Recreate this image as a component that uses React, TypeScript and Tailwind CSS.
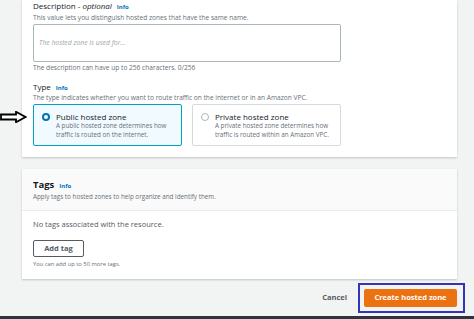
import React from "react";

const FONT = "font-['Open_Sans','Liberation_Sans',sans-serif]";

function InfoLink() {
  return <span className="ml-[5px] text-[6px] font-bold text-[#0073bb]">Info</span>;
}

function RadioCard({
  title,
  desc,
  selected,
}: {
  title: string;
  desc: string[];
  selected?: boolean;
}) {
  return (
    <div
      className={
        selected
          ? "flex h-[42px] w-[149px] gap-[6px] rounded-[2px] border border-[#00a1c9] bg-[#f1faff] px-[8px] pt-[6px]"
          : "flex h-[42px] w-[149px] gap-[6px] rounded-[2px] border border-[#d5dbdb] bg-white px-[8px] pt-[6px]"
      }
    >
      <div
        className={
          selected
            ? "mt-[2px] h-[8px] w-[8px] shrink-0 rounded-full border-[2.5px] border-[#0073bb] bg-white"
            : "mt-[2px] h-[8px] w-[8px] shrink-0 rounded-full border border-[#aab7b8] bg-white"
        }
      />
      <div className="flex flex-col">
        <span className="text-[8px] leading-[11px] text-[#16191f]">{title}</span>
        {desc.map((d) => (
          <span key={d} className="text-[6.3px] leading-[8.5px] text-[#687078]">
            {d}
          </span>
        ))}
      </div>
    </div>
  );
}

export default function App() {
  return (
    <div className={`relative flex h-[319px] w-[474px] flex-col overflow-hidden bg-[#f2f3f3] ${FONT}`}>
      {/* annotation arrow */}
      <svg className="absolute left-0 top-[111px]" width="27" height="12" viewBox="0 0 27 12">
        <polygon
          points="1,3.5 16,3.5 16,0.8 25.5,6 16,11.2 16,8.5 1,8.5"
          fill="white"
          stroke="black"
          strokeWidth="1.8"
          strokeLinejoin="miter"
        />
      </svg>

      <div className="flex flex-1 flex-col pl-[22px] pr-[17px]">
        {/* Hosted zone details (scrolled) */}
        <div className="flex flex-col bg-white px-[11px] pb-[11px] pt-0 shadow-[0_1px_2px_rgba(0,0,0,0.2)]">
          <div className="flex items-baseline text-[8px] leading-[11px] text-[#16191f]">
            Description - <i className="ml-[2px]">optional</i>
            <InfoLink />
          </div>
          <p className="text-[6.6px] leading-[9px] text-[#687078]">
            This value lets you distinguish hosted zones that have the same name.
          </p>
          <div className="mt-[2px] h-[38px] w-[308px] rounded-[2px] border border-[#aab7b8] px-[5px] pt-[2px]">
            <span className="text-[6.8px] italic text-[#9ba7a8]">The hosted zone is used for...</span>
          </div>
          <p className="mt-[1px] text-[6.6px] leading-[9px] text-[#687078]">
            The description can have up to 256 characters. 0/256
          </p>

          <div className="mt-[9px] flex items-baseline text-[8px] leading-[11px] text-[#16191f]">
            Type
            <InfoLink />
          </div>
          <p className="text-[6.6px] leading-[8px] text-[#687078]">
            The type indicates whether you want to route traffic on the internet or in an Amazon VPC.
          </p>
          <div className="mt-[2px] flex gap-[10px]">
            <RadioCard
              selected
              title="Public hosted zone"
              desc={["A public hosted zone determines how", "traffic is routed on the internet."]}
            />
            <RadioCard
              title="Private hosted zone"
              desc={["A private hosted zone determines how", "traffic is routed within an Amazon VPC."]}
            />
          </div>
        </div>

        {/* Tags */}
        <div className="mt-[12px] flex flex-col bg-white shadow-[0_1px_2px_rgba(0,0,0,0.2)]">
          <div className="flex h-[42px] flex-col justify-center border-b border-[#eaeded] bg-[#fafafa] px-[11px]">
            <div className="flex items-baseline">
              <span className="text-[9.5px] font-bold leading-[12px] text-[#16191f]">Tags</span>
              <InfoLink />
            </div>
            <p className="mt-[2px] text-[6.3px] leading-[8px] text-[#687078]">
              Apply tags to hosted zones to help organize and identify them.
            </p>
          </div>
          <div className="flex flex-col items-start px-[11px] pb-[11px] pt-[8px]">
            <p className="text-[7.5px] leading-[10px] text-[#545b64]">No tags associated with the resource.</p>
            <button className="mt-[11px] h-[17px] w-[51px] rounded-[2px] border border-[#545b64] bg-white text-[7.5px] font-bold text-[#545b64]">
              Add tag
            </button>
            <p className="mt-[3px] text-[5.8px] leading-[8px] text-[#687078]">You can add up to 50 more tags.</p>
          </div>
        </div>

        {/* Footer */}
        <div className="flex flex-1 items-center justify-end gap-[11px]">
          <span className="text-[7.5px] font-bold text-[#545b64]">Cancel</span>
          <div className="-mr-[8px] border-2 border-[#3434b8] py-[4px] pl-[4px] pr-[6px]">
            <div className="flex h-[18px] w-[93px] items-center justify-center rounded-[2px] bg-[#ec7211] text-[7.5px] font-bold text-white">
              Create hosted zone
            </div>
          </div>
        </div>
      </div>

      <div className="h-[3px] bg-[#2b3440]" />
    </div>
  );
}
